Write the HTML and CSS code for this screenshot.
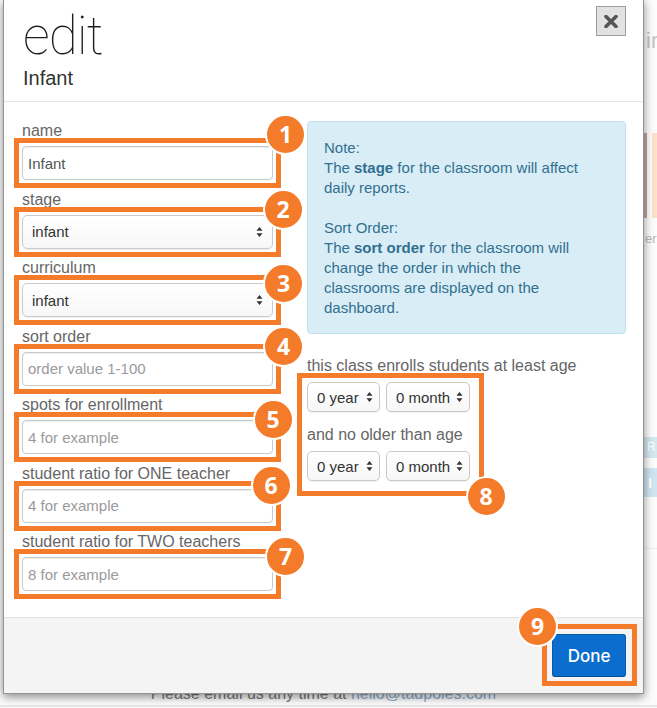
FILE: index.html
```html
<!DOCTYPE html>
<html lang="en">
<head>
<meta charset="utf-8">
<title>edit – Infant</title>
<link rel="stylesheet" href="styles.css">
</head>
<body>
  <div class="behind">
    <span class="peek peek-ir">ir</span>
    <span class="peek peek-red"></span>
    <span class="peek peek-peach"></span>
    <span class="peek peek-er">er</span>
    <span class="peek peek-re">R</span>
    <span class="peek peek-in">I</span>
    <span class="peek peek-line"></span>
    <p class="page-foot">Please email us any time at <a href="#">hello@tadpoles.com</a></p>
    <div class="page-rule"></div>
  </div>

  <div class="modal">
    <div class="modal-header">
      <h1 class="title">edit</h1>
      <h4 class="subtitle">Infant</h4>
      <button class="close" type="button" aria-label="Close">
        <svg width="14" height="13" viewBox="0 0 14 13"><path d="M2 1.5 L12 11.5 M12 1.5 L2 11.5" stroke="#555" stroke-width="3.6" stroke-linecap="round"/></svg>
      </button>
    </div>

    <div class="modal-body">
      <div class="col-left">
        <div class="field">
          <label class="field-label">name</label>
          <div class="annot">
            <input class="input" type="text" value="Infant">
            <span class="badge b1">1</span>
          </div>
        </div>
        <div class="field">
          <label class="field-label">stage</label>
          <div class="annot">
            <div class="sel">
              <select class="select"><option>infant</option></select>
              <svg class="arrows" width="7" height="11" viewBox="0 0 7 11"><path d="M0.5 4.3 L3.5 0.6 L6.5 4.3 Z M0.5 6.7 L3.5 10.4 L6.5 6.7 Z" fill="#333"/></svg>
            </div>
            <span class="badge b2">2</span>
          </div>
        </div>
        <div class="field">
          <label class="field-label">curriculum</label>
          <div class="annot">
            <div class="sel">
              <select class="select"><option>infant</option></select>
              <svg class="arrows" width="7" height="11" viewBox="0 0 7 11"><path d="M0.5 4.3 L3.5 0.6 L6.5 4.3 Z M0.5 6.7 L3.5 10.4 L6.5 6.7 Z" fill="#333"/></svg>
            </div>
            <span class="badge b3">3</span>
          </div>
        </div>
        <div class="field">
          <label class="field-label">sort order</label>
          <div class="annot">
            <input class="input" type="text" placeholder="order value 1-100">
            <span class="badge b4">4</span>
          </div>
        </div>
        <div class="field">
          <label class="field-label">spots for enrollment</label>
          <div class="annot">
            <input class="input" type="text" placeholder="4 for example">
            <span class="badge b5">5</span>
          </div>
        </div>
        <div class="field">
          <label class="field-label">student ratio for ONE teacher</label>
          <div class="annot">
            <input class="input" type="text" placeholder="4 for example">
            <span class="badge b6">6</span>
          </div>
        </div>
        <div class="field">
          <label class="field-label">student ratio for TWO teachers</label>
          <div class="annot">
            <input class="input" type="text" placeholder="8 for example">
            <span class="badge b7">7</span>
          </div>
        </div>
      </div>

      <div class="col-right">
        <p class="note">Note:<br>The <b>stage</b> for the classroom will affect daily reports.<br><br>Sort Order:<br>The <b>sort order</b> for the classroom will change the order in which the classrooms are displayed on the dashboard.</p>
        <div class="age-label">this class enrolls students at least age</div>
        <div class="annot age-box">
          <div class="age-row">
            <div class="sel sel-year">
              <select class="select select-sm"><option>0 year</option></select>
              <svg class="arrows arrows-sm" width="7" height="11" viewBox="0 0 7 11"><path d="M0.5 4.3 L3.5 0.6 L6.5 4.3 Z M0.5 6.7 L3.5 10.4 L6.5 6.7 Z" fill="#333"/></svg>
            </div>
            <div class="sel sel-month">
              <select class="select select-sm"><option>0 month</option></select>
              <svg class="arrows arrows-sm" width="7" height="11" viewBox="0 0 7 11"><path d="M0.5 4.3 L3.5 0.6 L6.5 4.3 Z M0.5 6.7 L3.5 10.4 L6.5 6.7 Z" fill="#333"/></svg>
            </div>
          </div>
          <div class="age-label age-label2">and no older than age</div>
          <div class="age-row">
            <div class="sel sel-year">
              <select class="select select-sm"><option>0 year</option></select>
              <svg class="arrows arrows-sm" width="7" height="11" viewBox="0 0 7 11"><path d="M0.5 4.3 L3.5 0.6 L6.5 4.3 Z M0.5 6.7 L3.5 10.4 L6.5 6.7 Z" fill="#333"/></svg>
            </div>
            <div class="sel sel-month">
              <select class="select select-sm"><option>0 month</option></select>
              <svg class="arrows arrows-sm" width="7" height="11" viewBox="0 0 7 11"><path d="M0.5 4.3 L3.5 0.6 L6.5 4.3 Z M0.5 6.7 L3.5 10.4 L6.5 6.7 Z" fill="#333"/></svg>
            </div>
          </div>
          <span class="badge b8">8</span>
        </div>
      </div>
    </div>

    <div class="modal-footer">
      <div class="annot annot-done">
        <button class="btn-done" type="button">Done</button>
        <span class="badge b9">9</span>
      </div>
    </div>
  </div>
</body>
</html>
```

FILE: styles.css
```css
* { box-sizing: border-box; }

html, body {
  margin: 0;
  padding: 0;
}

body {
  width: 657px;
  height: 708px;
  overflow: hidden;
  position: relative;
  background: #fcfcfc;
  font-family: "Liberation Sans", Arial, sans-serif;
  color: #333;
}

/* ---------- page behind the modal ---------- */
.behind {
  position: absolute;
  inset: 0;
}

.peek { position: absolute; display: block; }
.peek-ir { left: 646px; top: 28px; font-size: 22px; color: #c4c4c4; }
.peek-red { left: 644px; top: 133px; width: 3px; height: 85px; background: #c9a3a3; }
.peek-peach { left: 652px; top: 133px; width: 5px; height: 85px; background: #fde2cb; }
.peek-er { left: 645px; top: 231px; font-size: 13px; color: #b5b5b5; }
.peek-re { left: 644px; top: 437px; width: 13px; height: 21px; background: #d4e8f0; color: #fff; font-size: 12px; line-height: 21px; padding-left: 3px; }
.peek-in { left: 644px; top: 468px; width: 13px; height: 29px; background: #cfe5ef; color: #fff; font-weight: bold; font-size: 15px; line-height: 29px; padding-left: 4px; }
.peek-line { left: 644px; top: 548px; width: 13px; height: 1px; background: #ececec; }

.page-foot {
  position: absolute;
  left: 3px;
  width: 641px;
  top: 685px;
  margin: 0;
  text-align: center;
  font-size: 16px;
  line-height: 18px;
  color: #7a7a7a;
}
.page-foot a { color: #8aaed0; text-decoration: none; }

.page-rule {
  position: absolute;
  left: 0;
  right: 0;
  top: 705px;
  height: 2px;
  background: #e7e7e7;
}

/* ---------- modal ---------- */
.modal {
  position: absolute;
  left: 3px;
  top: -1px;
  width: 641px;
  background: #fff;
  border: 1px solid rgba(0, 0, 0, 0.42);
  box-shadow: 0 3px 9px rgba(0, 0, 0, 0.45);
}

.modal-header {
  position: relative;
  padding: 9px 19px 11px;
  border-bottom: 1px solid #e5e5e5;
}

.title {
  margin: 0;
  font-family: Roboto, "Liberation Sans", sans-serif;
  font-weight: 100;
  font-size: 53px;
  line-height: 54px;
  letter-spacing: -1px;
  color: #1e1e1e;
}

.subtitle {
  margin: 3px 0 0;
  font-weight: normal;
  font-size: 20px;
  line-height: 24px;
  color: #333;
}

.close {
  position: absolute;
  top: 6px;
  right: 17px;
  width: 30px;
  height: 30px;
  padding: 0;
  display: flex;
  align-items: center;
  justify-content: center;
  background: #e2e2e2;
  border: 1px solid #9c9c9c;
  border-radius: 0;
}

.modal-body {
  display: flex;
  gap: 34px;
  padding: 19px 17px 26px 18px;
}

.col-left { width: 251px; flex: none; }
.col-right { width: 319px; flex: none; display: flex; flex-direction: column; }

.field {
  display: flex;
  flex-direction: column;
  margin-bottom: 9.5px;
}
.field:last-child { margin-bottom: 0; }

.field-label {
  display: block;
  font-size: 16px;
  line-height: 20px;
  color: #666;
  margin-bottom: 5px;
}

.input {
  display: block;
  width: 100%;
  height: 34px;
  margin: 0;
  padding: 0 5px;
  font-family: "Liberation Sans", Arial, sans-serif;
  font-size: 15px;
  color: #555;
  background: #fff;
  border: 1px solid #c9c9c9;
  border-radius: 4px;
  box-shadow: inset 0 1px 1px rgba(0, 0, 0, 0.075);
  outline: none;
}
.input::placeholder { color: #9a9a9a; }

.sel { position: relative; }

.select {
  -webkit-appearance: none;
  appearance: none;
  display: block;
  width: 100%;
  height: 34px;
  margin: 0;
  padding: 0 0 0 9px;
  font-family: "Liberation Sans", Arial, sans-serif;
  font-size: 15px;
  color: #333;
  background: linear-gradient(#ffffff, #f7f7f7);
  border: 1px solid #c9c9c9;
  border-radius: 5px;
  box-shadow: 0 1px 1px rgba(0, 0, 0, 0.06);
  outline: none;
}

.arrows {
  position: absolute;
  right: 10px;
  top: 50%;
  transform: translateY(-50%);
  pointer-events: none;
}

/* ---------- orange annotation frames ---------- */
.annot {
  position: relative;
  border: 5px solid #f47b2a;
  padding: 3px;
  margin: -8px;
}

.badge {
  position: absolute;
  z-index: 2;
  width: 41px;
  height: 41px;
  border-radius: 50%;
  background: #f47b2a;
  border: 2px solid #fff;
  color: #fff;
  font-family: "Open Sans", "Liberation Sans", sans-serif;
  font-weight: 700;
  font-size: 23px;
  line-height: 36px;
  text-align: center;
}

.b1 { left: 246px; top: -29.5px; }
.b2 { left: 243.5px; top: -22.5px; }
.b3 { left: 244px; top: -17.5px; }
.b4 { left: 244px; top: -23px; }
.b5 { left: 233.5px; top: -18px; }
.b6 { left: 231.5px; top: -20.5px; }
.b7 { left: 246px; top: -18.5px; }
.b8 { left: 163.5px; top: 97.5px; }
.b9 { left: -30px; top: -23.5px; }

/* ---------- right column ---------- */
.note {
  margin: 0;
  padding: 16px 30px 15px 16px;
  background: #d9edf7;
  border: 1px solid #bfe1ee;
  border-radius: 4px;
  color: #31708f;
  font-size: 15px;
  line-height: 20px;
}

.age-label {
  margin-top: 22px;
  font-size: 16px;
  line-height: 20px;
  color: #666;
}

.age-box {
  width: fit-content;
  margin: -3px 0 0 -10px;
  padding: 4px 9px 10px 5px;
}

.age-row {
  display: flex;
  gap: 6px;
}

.age-label2 {
  margin: 13px 0 6px;
}

.sel-year { width: 73px; }
.sel-month { width: 84px; }

.select-sm {
  height: 30px;
  padding-left: 9px;
}

.arrows-sm { right: 7px; }

/* ---------- footer ---------- */
.modal-footer {
  display: flex;
  justify-content: flex-end;
  padding: 16px 17px 16px;
  background: #f4f4f4;
  border-top: 1px solid #e3e3e3;
}

.annot-done {
  padding: 5px 6px 4px 5px;
  margin: -10px -11px -9px -10px;
}

.btn-done {
  display: block;
  width: 74px;
  height: 43px;
  padding: 0;
  background: #0b6dce;
  border: 1px solid #0a5aab;
  border-bottom-color: #084c92;
  border-radius: 3px;
  color: #fff;
  font-family: Inter, "Liberation Sans", Arial, sans-serif;
  font-weight: 500;
  font-size: 17px;
}
```
